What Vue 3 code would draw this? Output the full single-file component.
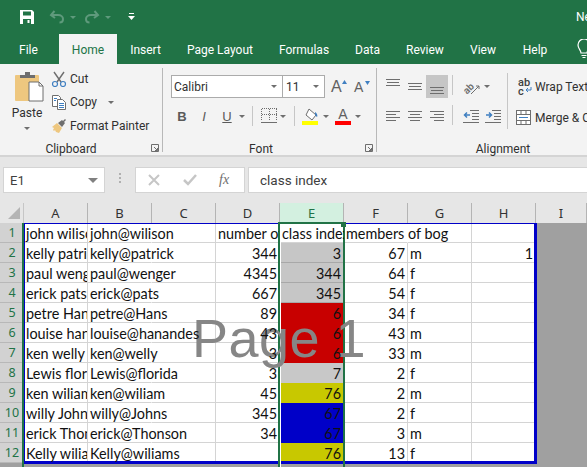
<script setup>
const tabs = [
  { label: 'File', w: 59 },
  { label: 'Home', w: 58, active: true },
  { label: 'Insert', w: 57 },
  { label: 'Page Layout', w: 92 },
  { label: 'Formulas', w: 76 },
  { label: 'Data', w: 51 },
  { label: 'Review', w: 64 },
  { label: 'View', w: 52 },
  { label: 'Help', w: 52 }
]
const columns = ['A', 'B', 'C', 'D', 'E', 'F', 'G', 'H', 'I']
const rows = [
  ['john wilison', 'john@wilison', 'number of', 'class index', 'members of bog', '', ''],
  ['kelly patrick', 'kelly@patrick', '344', '3', '67', 'm', '1'],
  ['paul wenger', 'paul@wenger', '4345', '344', '64', 'f', ''],
  ['erick pats', 'erick@pats', '667', '345', '54', 'f', ''],
  ['petre Hans', 'petre@Hans', '89', '6', '34', 'f', ''],
  ['louise hanandes', 'louise@hanandes', '43', '6', '43', 'm', ''],
  ['ken welly', 'ken@welly', '3', '6', '33', 'm', ''],
  ['Lewis florida', 'Lewis@florida', '3', '7', '2', 'f', ''],
  ['ken wiliam', 'ken@wiliam', '45', '76', '2', 'm', ''],
  ['willy Johns', 'willy@Johns', '345', '67', '2', 'f', ''],
  ['erick Thonson', 'erick@Thonson', '34', '67', '3', 'm', ''],
  ['Kelly wiliams', 'Kelly@wiliams', '', '76', '13', 'f', '']
]
const fills = ['', 'g', 'g', 'g', 'r', 'r', 'r', 'l', 'y', 'b', 'b', 'y']
</script>

<template>
  <div class="app">
    <div class="titlebar">
      <svg class="qa save" width="16" height="16" viewBox="0 0 16 16"><path d="M1 1h12l2 2v12H1z" fill="#fff"/><rect x="4" y="2.500" width="8" height="4" fill="#217346"/><rect x="4" y="10" width="8" height="5" fill="#217346"/><rect x="8.500" y="11" width="2" height="3" fill="#fff"/></svg>
      <svg class="qa undo" width="16" height="16" viewBox="0 0 16 16" fill="none" stroke="#5f9a7c" stroke-width="2"><path d="M5.500 2 2 6l4 3M2.500 6H9c3 0 5 2 5 4s-1.500 3.500-3.500 3.500"/></svg>
      <i class="caret dim"></i>
      <svg class="qa redo" width="16" height="16" viewBox="0 0 16 16" fill="none" stroke="#5f9a7c" stroke-width="2"><path d="M10.500 2 14 6l-4 3M13.500 6H7c-3 0-5 2-5 4s1.500 3.500 3.500 3.500"/></svg>
      <i class="caret dim"></i>
      <svg class="qa more" width="7" height="8" viewBox="0 0 7 8" fill="#fff"><rect x="1" width="5" height="1"/><path d="M0 3h7L3.500 7z"/></svg>
      <span class="doc">New</span>
    </div>

    <div class="tabs">
      <span v-for="t in tabs" :key="t.label" class="tab" :class="{ active: t.active }" :style="{ width: t.w + 'px' }">{{ t.label }}</span>
      <svg class="bulb" width="14" height="20" viewBox="0 0 14 20" fill="none" stroke="#fff" stroke-width="1.200"><path d="M4 14c0-3-3-4-3-8a6 6 0 0 1 12 0c0 4-3 5-3 8zM4.500 16.500h5M5.500 18.500h3"/></svg>
    </div>

    <div class="ribbon">
      <section class="group g-clip">
        <div class="group-body clip-body">
          <div class="paste">
            <svg width="30" height="30" viewBox="0 0 30 30">
              <rect x="1" y="3" width="24" height="26" rx="1" fill="#eec77f"/>
              <path d="M6 6V3h5V0h5v3h5v3z" fill="#6e6e6e"/>
              <path d="M15 10h10l4 4v15H15z" fill="#fff" stroke="#6e6e6e"/>
              <path d="M25 10v4h4" fill="none" stroke="#6e6e6e"/>
            </svg>
            <span class="paste-label">Paste</span>
            <i class="caret"></i>
          </div>
          <div class="clip-rows">
            <div class="clip-row">
              <svg width="16" height="16" viewBox="0 0 16 16" fill="none"><path d="M3 1l7 10M13 1L6 11" stroke="#6e6e6e" stroke-width="1.400"/><circle cx="4" cy="13" r="2.500" stroke="#3f7fc1" stroke-width="1.200"/><circle cx="12" cy="13" r="2.500" stroke="#3f7fc1" stroke-width="1.200"/></svg>
              <span>Cut</span>
            </div>
            <div class="clip-row">
              <svg width="16" height="16" viewBox="0 0 16 16" fill="none" stroke="#6e6e6e"><path d="M1.500 1.500h6l2 2v9h-8z" fill="#fff"/><path d="M6.500 5.500h5l3 3v7h-8z" fill="#fff"/><path d="M8 9.500h5M8 11.500h5M8 13.500h5M3 4.500h3M3 6.500h2" stroke="#3f7fc1"/></svg>
              <span>Copy</span>
              <i class="caret copy-caret"></i>
            </div>
            <div class="clip-row">
              <svg width="16" height="16" viewBox="0 0 16 16"><path d="M1 9l5-4 5 5-3 5-3-1-1-2-1 1-1-1 1-2z" fill="#eec77f"/><path d="M7 5l4-3 1 1 2-2 1 1-2 2 1 1-3 4z" fill="#6e6e6e"/></svg>
              <span>Format Painter</span>
            </div>
          </div>
        </div>
        <footer class="group-title">
          <span>Clipboard</span>
          <svg class="launcher" width="8" height="8" viewBox="0 0 8 8" fill="none" stroke="#6e6e6e"><path d="M.5 7.500V.5h7v7zM3 3l3.500 3.500M6.500 4v2.500H4"/></svg>
        </footer>
      </section>

      <section class="group g-font">
        <div class="group-body font-body">
          <div class="font-top">
            <div class="select font-name"><span>Calibri</span><i class="caret"></i></div>
            <div class="select font-size"><span>11</span><i class="caret"></i></div>
            <span class="grow up">A<svg width="5" height="4" viewBox="0 0 5 4"><path d="M0 4l2.500-4L5 4z" fill="#3f7fc1"/></svg></span>
            <span class="grow down">A<svg width="5" height="4" viewBox="0 0 5 4"><path d="M0 0l2.500 4L5 0z" fill="#3f7fc1"/></svg></span>
          </div>
          <div class="font-bottom">
            <b class="fmt b">B</b>
            <em class="fmt i">I</em>
            <u class="fmt u">U</u>
            <i class="caret c-u"></i>
            <span class="sep s1"></span>
            <svg class="borders" width="16" height="16" viewBox="0 0 16 16" fill="none" shape-rendering="crispEdges"><path d="M.5 1v12M8.500 1v12M15.500 1v12M1 .5h15M1 6.500h15" stroke="#6e6e6e" stroke-dasharray="1 1"/><path d="M0 14.500h16" stroke="#6e6e6e" stroke-width="1.500"/></svg>
            <i class="caret c-b"></i>
            <span class="sep s2"></span>
            <svg class="fill-ic" width="16" height="17" viewBox="0 0 16 17"><path d="M7 1l7 6-4 5-6-5z" fill="#fff" stroke="#6e6e6e"/><path d="M13 4c2 1 3 4 2 5-2-1-2-3-2-5z" fill="#3f7fc1"/><rect y="13" width="16" height="4" fill="#ffff00"/></svg>
            <i class="caret c-f"></i>
            <span class="color-a">A<i></i></span>
            <i class="caret c-a"></i>
          </div>
        </div>
        <footer class="group-title">
          <span>Font</span>
          <svg class="launcher" width="8" height="8" viewBox="0 0 8 8" fill="none" stroke="#6e6e6e"><path d="M.5 7.500V.5h7v7zM3 3l3.500 3.500M6.500 4v2.500H4"/></svg>
        </footer>
      </section>

      <section class="group g-align">
        <div class="group-body align-body">
          <div class="align-grid">
            <span class="al"><svg width="14" height="8" viewBox="0 0 14 8" stroke="#6e6e6e"><path d="M0 .5h14M1 3.500h12M0 6.500h14"/></svg></span>
            <span class="al"><svg width="14" height="8" viewBox="0 0 14 8" stroke="#6e6e6e"><path d="M0 .5h14M1 3.500h12M0 6.500h14"/></svg></span>
            <span class="al on"><svg width="14" height="8" viewBox="0 0 14 8" stroke="#6e6e6e"><path d="M0 .5h14M1 3.500h12M0 6.500h14"/></svg></span>
            <span class="al"><svg width="14" height="11" viewBox="0 0 14 11" stroke="#6e6e6e"><path d="M0 .5h14M0 3.500h10M0 6.500h14M0 9.500h10"/></svg></span>
            <span class="al"><svg width="14" height="11" viewBox="0 0 14 11" stroke="#6e6e6e"><path d="M0 .5h14M2 3.500h10M0 6.500h14M2 9.500h10"/></svg></span>
            <span class="al"><svg width="14" height="11" viewBox="0 0 14 11" stroke="#6e6e6e"><path d="M0 .5h14M4 3.500h10M0 6.500h14M4 9.500h10"/></svg></span>
          </div>
          <span class="sep tall"></span>
          <div class="orient-col">
            <div class="orient">
              <svg width="17" height="16" viewBox="0 0 17 16" fill="none" stroke="#6e6e6e"><text x="-1" y="12" transform="rotate(-45 6 8)" font-size="10" font-weight="600" fill="#6e6e6e" stroke="none" font-family="Roboto, sans-serif">ab</text><path d="M8 15 16 7M16 7h-3M16 7v3"/></svg>
              <i class="caret"></i>
            </div>
            <div class="indents">
              <svg width="16" height="13" viewBox="0 0 16 13" fill="none"><path d="M7 .5h9M9 3.500h7M9 6.500h7M9 9.500h7M0 12.500h16" stroke="#6e6e6e"/><path d="M7 5H2M4 2.500 1.500 5 4 7.500" stroke="#3f7fc1" stroke-width="1.500"/></svg>
              <svg width="16" height="13" viewBox="0 0 16 13" fill="none"><path d="M7 .5h9M9 3.500h7M9 6.500h7M9 9.500h7M0 12.500h16" stroke="#6e6e6e"/><path d="M1 5h5M4 2.500 6.500 5 4 7.500" stroke="#3f7fc1" stroke-width="1.500"/></svg>
            </div>
          </div>
          <span class="sep tall2"></span>
          <div class="wrap-col">
            <div class="wrap-row">
              <span class="abc">ab<br>c<svg width="7" height="6" viewBox="0 0 7 6" fill="none" stroke="#3f7fc1"><path d="M6 0v3H1.500M3 1 1 3l2 2"/></svg></span>
              <span>Wrap Text</span>
            </div>
            <div class="wrap-row merge">
              <svg width="15" height="15" viewBox="0 0 15 15" fill="#fff" stroke="#6e6e6e"><rect x=".5" y=".5" width="14" height="14"/><path d="M.5 4.500h14M.5 10.500h14M5 .5v4M10 .5v4M5 10.500v4M10 10.500v4"/><path d="M3 7.500h9" stroke="#3f7fc1"/></svg>
              <span>Merge &amp; Center</span>
            </div>
          </div>
        </div>
        <footer class="group-title"><span>Alignment</span></footer>
      </section>
    </div>

    <div class="formula">
      <div class="namebox"><span>E1</span><i class="caret big"></i></div>
      <span class="dots"></span>
      <div class="fx-box">
        <svg width="12" height="12" viewBox="0 0 12 12" stroke="#c6c6c6" stroke-width="2"><path d="M1 1l10 10M11 1 1 11"/></svg>
        <svg width="14" height="12" viewBox="0 0 14 12" fill="none" stroke="#c6c6c6" stroke-width="2.500"><path d="M1 6l4 4 8-9"/></svg>
        <em class="fx">fx</em>
      </div>
      <div class="input">class index</div>
    </div>

    <div class="sheet">
      <div class="corner"><span></span></div>
      <div v-for="c in columns" :key="c" class="colhead" :class="{ sel: c === 'E' }">{{ c }}</div>
      <template v-for="(r, i) in rows" :key="i">
        <div class="rowhead">{{ i + 1 }}</div>
        <div class="cell text clip"><span class="v">{{ r[0] }}</span></div>
        <div class="cell text over"><span class="v">{{ r[1] }}</span></div>
        <div class="cell blank"></div>
        <div class="cell" :class="i === 0 ? 'text clip' : 'num'"><span class="v">{{ r[2] }}</span></div>
        <div class="cell e" :class="[i === 0 ? 'text clip' : 'num', fills[i]]"><span class="v">{{ r[3] }}</span></div>
        <div class="cell" :class="i === 0 ? 'text over' : 'num'"><span class="v">{{ r[4] }}</span></div>
        <div class="cell text"><span class="v">{{ r[5] }}</span></div>
        <div class="cell num"><span class="v">{{ r[6] }}</span></div>
        <div class="outside"></div>
      </template>

      <div class="print-frame"></div>
      <div class="left-line"></div>
      <div class="selection"><i></i></div>
      <div class="watermark">Page 1</div>
    </div>
  </div>
</template>

<style>
html, body { margin: 0; overflow: hidden; }
</style>

<style scoped>
.app {
  width: 587px; height: 467px; overflow: hidden; background: #e6e6e6;
  font-family: Roboto, "Noto Sans", sans-serif; font-size: 12px; color: #303030;
}
i { font-style: normal; }
.caret { display: block; width: 0; height: 0; border: 3.500px solid transparent; border-top: 3.500px solid #6e6e6e; border-bottom: 0; flex: none; }
.caret.dim { border-top-color: #5f9a7c; margin: 0 6px 0 5px; }
.caret.big { border-width: 5px 5px 0; border-top-color: #808080; }

.titlebar { height: 34px; background: #217346; display: flex; align-items: center; color: #fff; }
.qa { flex: none; }
.save { margin-left: 19px; margin-right: 14px; }
.redo { margin-left: 2px; }
.more { margin-left: 11px; }
.doc { margin-left: auto; margin-right: -13px; font-size: 12px; }

.tabs { height: 30px; background: #217346; display: flex; align-items: stretch; position: relative; color: #fff; }
.tab { flex: none; display: flex; align-items: center; justify-content: center; padding-top: 1px; box-sizing: border-box; }
.tab.active { background: #f3f3f3; color: #217346; }
.tab:first-child { justify-content: flex-start; padding-left: 19px; }
.bulb { position: absolute; left: 577px; top: 5px; }

.ribbon { height: 93px; background: #f3f3f3; border-bottom: 2px solid #d4d4d4; display: flex; box-sizing: border-box; }
.group { flex: none; position: relative; display: flex; flex-direction: column; box-sizing: border-box; }
.group::after { content: ""; position: absolute; right: 0; top: 4px; height: 84px; width: 1px; background: #b8b8b8; }
.g-clip { width: 163px; }
.g-font { width: 214px; }
.g-align { flex: 1; min-width: 0; }
.g-align::after { display: none; }
.group-body { height: 75px; flex: none; position: relative; }
.group-title { height: 19px; flex: none; display: flex; align-items: center; justify-content: center; position: relative; }
.launcher { position: absolute; right: 4px; top: 5px; }
.g-clip .group-title { padding-right: 21px; }
.g-font .group-title { padding-right: 18px; }
.g-align .group-title { padding-left: 42px; }

.clip-body { display: flex; }
.paste { width: 54px; margin-right: -3px; flex: none; display: flex; flex-direction: column; align-items: center; padding-top: 8px; box-sizing: border-box; }
.paste svg { margin-left: 4px; }
.paste-label { line-height: 15px; margin-top: 4px; }
.paste .caret { margin-top: 6px; }
.clip-rows { display: flex; flex-direction: column; padding-top: 3px; }
.clip-row { height: 23.500px; display: flex; align-items: center; gap: 3px; }
.clip-row svg { flex: none; }
.copy-caret { margin-left: 8px; }

.font-body { display: flex; flex-direction: column; }
.font-top { display: flex; align-items: center; padding: 11px 0 0 8px; height: 23px; }
.select { height: 23px; box-sizing: border-box; background: #fff; border: 1px solid #ababab; display: flex; align-items: center; justify-content: space-between; padding: 0 5px 0 2px; }
.font-name { width: 112px; }
.font-size { width: 43px; margin-left: -1px; padding-left: 3px; }
.grow { position: relative; display: block; font-family: "Liberation Sans", sans-serif; color: #606060; text-align: left; }
.grow svg { position: absolute; top: 2px; left: 11px; }
.grow.up { font-size: 16px; margin-left: 6px; width: 18px; }
.grow.down { font-size: 14px; margin-left: 5px; width: 18px; }
.font-bottom { display: flex; align-items: center; height: 22px; margin-top: 7px; position: relative; }
.font-bottom .fmt { font-family: "Liberation Sans", sans-serif; font-size: 13px; color: #5a5a5a; width: 12px; text-align: center; flex: none; }
.fmt.b { margin-left: 13px; }
.fmt.i { margin-left: 10px; }
.fmt.u { margin-left: 11px; }
.c-u { margin-left: 6px; }
.sep { width: 1px; background: #c6c6c6; flex: none; display: block; height: 20px; }
.s1 { margin-left: 7px; }
.borders { margin-left: 8px; flex: none; }
.c-b { margin-left: 3px; }
.s2 { margin-left: 8px; }
.fill-ic { margin-left: 7px; flex: none; }
.c-f { margin-left: 5px; }
.color-a { position: relative; margin-left: 6px; width: 16px; height: 18px; text-align: center; font-family: "Liberation Sans", sans-serif; font-size: 14px; line-height: 14px; color: #606060; flex: none; }
.color-a i { position: absolute; left: 0; bottom: 0; width: 16px; height: 4px; background: #f00; }
.c-a { margin-left: 4px; }

.align-body { display: flex; }
.align-grid { margin-top: 11px; display: grid; grid-template-columns: 22px 22px 22px; grid-template-rows: 23px 22px; row-gap: 7px; flex: none; margin-left: 1px; padding-left: 4px; }
.al { display: flex; align-items: center; justify-content: center; }
.al:first-child svg { margin-bottom: 8px; }
.al.on { background: #c6c6c6; }
.al.on svg { margin-top: 8px; }
.tall { height: 20px; margin: 11px 0 0 4px; position: relative; }
.tall::after { content: ""; position: absolute; left: 0; top: 30px; width: 1px; height: 20px; background: #c6c6c6; }
.orient-col { width: 44px; flex: none; margin-left: 10px; padding-top: 11px; box-sizing: border-box; }
.orient { height: 23px; display: flex; align-items: center; gap: 4px; }
.indents { display: flex; gap: 6px; height: 22px; margin-top: 7px; align-items: center; }
.tall2 { height: 56px; margin: 9px 0 0 0; }
.wrap-col { margin-left: 10px; padding-top: 11px; white-space: nowrap; }
.wrap-row { height: 23px; display: flex; align-items: center; gap: 2px; }
.merge { margin-top: 8px; margin-left: -2px; gap: 4px; }
.abc { position: relative; font-size: 11px; line-height: 9px; font-weight: 500; width: 15px; color: #404040; }
.abc svg { position: absolute; left: 7px; top: 9px; }

.formula { height: 46px; display: flex; align-items: flex-start; padding-top: 10px; box-sizing: border-box; }
.namebox { width: 102px; height: 26px; margin-left: 3px; box-sizing: border-box; background: #fff; border: 1px solid #d4d4d4; display: flex; align-items: center; justify-content: space-between; padding: 0 6px; font-size: 13px; flex: none; color: #404040; }
.dots { width: 2px; height: 2px; margin: 6px 14px 0 14px; background: #b0b0b0; box-shadow: 0 4px #b0b0b0, 0 8px #b0b0b0; flex: none; }
.fx-box { width: 110px; height: 26px; box-sizing: border-box; background: #fff; border: 1px solid #d4d4d4; display: flex; align-items: center; padding-left: 12px; gap: 23px; flex: none; }
.fx { font-family: "Liberation Serif", serif; font-size: 14px; font-weight: 400; color: #6e6e6e; margin-left: -1px; }
.input { flex: 1; height: 26px; margin-left: 3px; box-sizing: border-box; background: #fff; border: 1px solid #d4d4d4; border-right: 0; padding-left: 11px; display: flex; align-items: center; font-size: 13.500px; color: #404040; }

.sheet { position: relative; display: grid; grid-template-columns: 24px repeat(8, 64px) 1fr; grid-template-rows: repeat(13, 20px); background: #a0a0a0; height: 264px; overflow: hidden; font-family: Lato, sans-serif; font-size: 14.400px; color: #111; }
.corner { background: #e6e6e6; border-right: 1px solid #c6c6c6; position: relative; box-sizing: border-box; }
.corner span { position: absolute; left: 8px; top: 4px; width: 12px; height: 12px; background: #b4b4b4; clip-path: polygon(100% 0, 100% 100%, 0 100%); }
.colhead { background: #e6e6e6; border-right: 1px solid #b4b4b4; box-sizing: border-box; text-align: center; line-height: 20px; color: #333; font-family: "Noto Sans", sans-serif; font-size: 13px; }
.colhead.sel { background: #d3f0e0; color: #217346; }
.colhead:last-of-type { border-right: 0; }
.rowhead { background: #d2d2d2; border-bottom: 1px solid #b8b8b8; box-sizing: border-box; text-align: center; line-height: 20px; color: #217346; font-family: "Noto Sans", sans-serif; font-size: 12.500px; }
.cell { background: #fff; border-right: 1px solid #d4d4d4; border-bottom: 1px solid #d4d4d4; box-sizing: border-box; white-space: nowrap; line-height: 21px; min-width: 0; padding: 0 2px; }
.v { position: relative; z-index: 5; }
.cell.text { text-align: left; }
.cell.num { text-align: right; }
.cell.clip { overflow: hidden; }
.cell.over { border-right-color: transparent; }
.cell.e { overflow: hidden; border-right: 0; padding-right: 3px; }
.cell.e.g { background: #c6c6c6; border-bottom-color: #a8a8a8; }
.cell.e.l { background: #c8c8c8; border-bottom-color: #c8c8c8; }
.cell.e.r { background: #c80000; border-bottom-color: #c80000; }
.cell.e.y { background: #c8c800; border-bottom-color: #c8c800; }
.cell.e.b { background: #0000c8; border-bottom-color: #0000c8; }
.outside { background: #a0a0a0; }

.print-frame { position: absolute; left: 24px; top: 20px; width: 513px; height: 241px; box-sizing: border-box; border: solid #0000c8; border-width: 1px 3px 3px 1px; z-index: 2; }
.left-line { position: absolute; left: 22px; top: 20px; bottom: 0; width: 2px; background: #217346; z-index: 3; }
.selection { position: absolute; left: 278px; top: 19px; width: 67px; bottom: -4px; box-sizing: border-box; border: 2px solid #217346; box-shadow: inset 1px 0 #fff; z-index: 3; }
.selection i { position: absolute; right: -3px; top: -2px; width: 5px; height: 5px; background: #217346; }
.watermark { position: absolute; left: 192px; top: 103px; font-family: "Liberation Sans", sans-serif; font-size: 54px; letter-spacing: .5px; line-height: 64px; color: #868686; white-space: nowrap; z-index: 4; }
</style>
